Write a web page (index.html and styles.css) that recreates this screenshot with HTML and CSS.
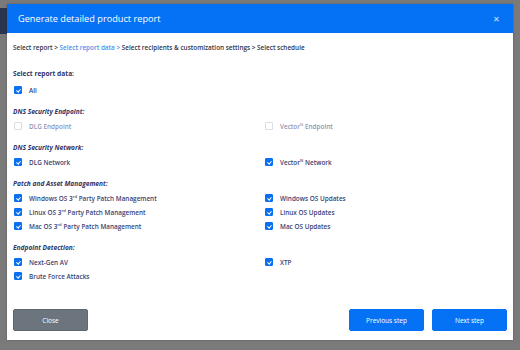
FILE: index.html
```html
<!DOCTYPE html>
<html lang="en">
<head>
    <meta charset="UTF-8">
    <meta name="viewport" content="width=device-width, initial-scale=1.0">
    <title>Generate detailed product report</title>
    <link rel="stylesheet" href="styles.css">
</head>
<body>
    <div class="backdrop-strip"></div>

    <!-- Report wizard modal -->
    <div class="modal">
        <div class="modal-header">
            <h1>Generate detailed product report</h1>
            <span class="close-x">&#x2715;</span>
        </div>

        <div class="modal-body">
            <p class="steps">
                Select report &gt; <span class="current">Select report data &gt;</span> Select recipients &amp; customization settings &gt; Select schedule
            </p>

            <h2 class="section-title">Select report data:</h2>
            <div class="grid first">
                <label class="check"><span class="box on"></span><span>All</span></label>
            </div>

            <h3 class="group-title">DNS Security Endpoint:</h3>
            <div class="grid">
                <label class="check disabled"><span class="box"></span><span>DLG Endpoint</span></label>
                <label class="check disabled"><span class="box"></span><span>Vector<sup>N</sup> Endpoint</span></label>
            </div>

            <h3 class="group-title">DNS Security Network:</h3>
            <div class="grid">
                <label class="check"><span class="box on"></span><span>DLG Network</span></label>
                <label class="check"><span class="box on"></span><span>Vector<sup>N</sup> Network</span></label>
            </div>

            <h3 class="group-title">Patch and Asset Management:</h3>
            <div class="grid">
                <label class="check"><span class="box on"></span><span>Windows OS 3<sup>rd</sup> Party Patch Management</span></label>
                <label class="check"><span class="box on"></span><span>Windows OS Updates</span></label>
                <label class="check"><span class="box on"></span><span>Linux OS 3<sup>rd</sup> Party Patch Management</span></label>
                <label class="check"><span class="box on"></span><span>Linux OS Updates</span></label>
                <label class="check"><span class="box on"></span><span>Mac OS 3<sup>rd</sup> Party Patch Management</span></label>
                <label class="check"><span class="box on"></span><span>Mac OS Updates</span></label>
            </div>

            <h3 class="group-title">Endpoint Detection:</h3>
            <div class="grid">
                <label class="check"><span class="box on"></span><span>Next-Gen AV</span></label>
                <label class="check"><span class="box on"></span><span>XTP</span></label>
                <label class="check"><span class="box on"></span><span>Brute Force Attacks</span></label>
            </div>
        </div>

        <div class="modal-footer">
            <button class="btn btn-grey">Close</button>
            <div class="right-buttons">
                <button class="btn btn-blue">Previous step</button>
                <button class="btn btn-blue">Next step</button>
            </div>
        </div>
    </div>
</body>
</html>
```

FILE: styles.css
```css
/* Basic Reset */
body, h1, h2, h3, p, button {
    margin: 0;
    padding: 0;
    box-sizing: border-box;
}

body {
    font-family: "Open Sans", "Noto Sans", sans-serif;
    background-color: #7a7a7b;
    width: 520px;
    height: 350px;
    padding: 4px 7px 10px 7px;
    box-sizing: border-box;
    position: relative;
    overflow: hidden;
}

/* bits of the page behind the overlay */
.backdrop-strip {
    position: absolute;
    left: 0;
    top: 8px;
    width: 7px;
    height: 26px;
    background-color: #2a3550;
}

/* Modal */
.modal {
    position: relative;
    height: 336px;
    background-color: #fff;
    display: flex;
    flex-direction: column;
    box-shadow: 0 0 2px rgba(0, 0, 0, 0.3);
}

.modal-header {
    height: 29px;
    background-color: #0572f6;
    display: flex;
    align-items: center;
    justify-content: space-between;
    padding: 0 13px 0 11px;
}

.modal-header h1 {
    font-size: 9.2px;
    font-weight: 400;
    color: #fff;
}

.close-x {
    color: #cfe2ff;
    font-size: 8px;
}

.modal-body {
    flex: 1;
    padding: 10px 6px 0 6px;
}

.steps {
    font-size: 6.4px;
    line-height: 10px;
    font-weight: 600;
    color: #2f3348;
}

.steps .current {
    color: #4b90ea;
}

.section-title {
    margin-top: 14px;
    margin-bottom: 2px;
    font-size: 6.6px;
    line-height: 14px;
    font-weight: 700;
    color: #2f3568;
}

.grid.first {
    margin-bottom: 1px;
}

.group-title {
    margin-top: 8px;
    font-size: 6.6px;
    line-height: 14px;
    font-weight: 700;
    font-style: italic;
    color: #2f3568;
}

/* Checkbox rows */
.grid {
    display: grid;
    grid-template-columns: 251px 1fr;
}

.check {
    display: flex;
    align-items: center;
    height: 14px;
    font-size: 6.4px;
    font-weight: 600;
    color: #3a4274;
}

.check sup {
    font-size: 4.2px;
    line-height: 0;
    vertical-align: 3px;
}

.check.disabled {
    color: #8f95b5;
}

.box {
    width: 8px;
    height: 8px;
    margin: 0 7px 0 1px;
    border: 1px solid #dcdde3;
    border-radius: 1px;
    box-sizing: border-box;
    position: relative;
}

.box.on {
    background-color: #0a6ff1;
    border-color: #0a6ff1;
}

.box.on::after {
    content: "";
    position: absolute;
    left: 2px;
    top: 1px;
    width: 1.5px;
    height: 3px;
    border: solid #fff;
    border-width: 0 1px 1px 0;
    transform: rotate(40deg);
}

/* Footer buttons */
.modal-footer {
    display: flex;
    justify-content: space-between;
    padding: 0 6px 9px 6px;
}

.right-buttons {
    display: flex;
    gap: 8px;
}

.btn {
    width: 75px;
    height: 22px;
    border-radius: 2px;
    font-family: "Open Sans", "Noto Sans", sans-serif;
    font-size: 6.5px;
    color: #fff;
    cursor: pointer;
}

.btn-grey {
    background-color: #6c757e;
    border: 1px solid #5f676f;
}

.btn-blue {
    background-color: #0572f6;
    border: 1px solid #0572f6;
}
```
